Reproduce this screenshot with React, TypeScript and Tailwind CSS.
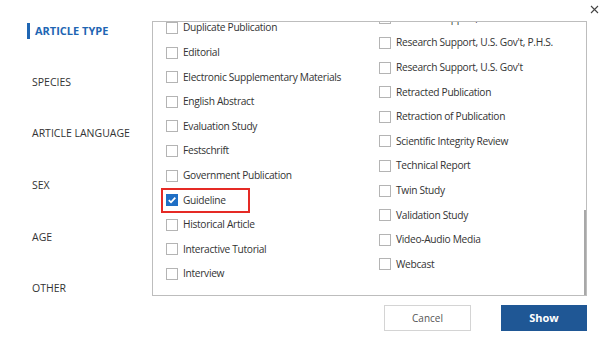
import React from "react";

const col1 = [
  "Duplicate Publication",
  "Editorial",
  "Electronic Supplementary Materials",
  "English Abstract",
  "Evaluation Study",
  "Festschrift",
  "Government Publication",
  "Guideline",
  "Historical Article",
  "Interactive Tutorial",
  "Interview",
];

const col2 = [
  "Research Support, Non-U.S. Gov't",
  "Research Support, U.S. Gov't, P.H.S.",
  "Research Support, U.S. Gov't",
  "Retracted Publication",
  "Retraction of Publication",
  "Scientific Integrity Review",
  "Technical Report",
  "Twin Study",
  "Validation Study",
  "Video-Audio Media",
  "Webcast",
];

const nav = ["SPECIES", "ARTICLE LANGUAGE", "SEX", "AGE", "OTHER"];

function Row({ label, checked, highlight }: { label: string; checked?: boolean; highlight?: boolean }) {
  return (
    <div className="relative flex h-[24.6px] items-center">
      {checked ? (
        <span className="flex h-[12px] w-[12px] items-center justify-center bg-[#1f6fc5]">
          <svg width="10" height="10" viewBox="0 0 10 10">
            <path d="M1.8 5.2 L4 7.3 L8.3 2.6" fill="none" stroke="#fff" strokeWidth="1.8" />
          </svg>
        </span>
      ) : (
        <span className="h-[12px] w-[12px] border border-[#b4b4b4] bg-white" />
      )}
      <span className="ml-[5px] whitespace-nowrap text-[10.2px] tracking-[-0.3px] text-[#333]">{label}</span>
      {highlight && (
        <span className="pointer-events-none absolute left-[-5px] top-[0px] h-[25px] w-[89px] border-2 border-[#e52a25]" />
      )}
    </div>
  );
}

export default function App() {
  return (
    <div
      className="relative h-[337px] w-[600px] overflow-hidden bg-white"
      style={{ fontFamily: '"Open Sans", "Noto Sans", sans-serif' }}
    >
      <button className="absolute right-[1px] top-[3px] flex h-[12px] w-[10px] items-center justify-center">
        <svg width="9" height="9" viewBox="0 0 9 9">
          <path d="M1 1 L8 8 M8 1 L1 8" stroke="#444" strokeWidth="1.1" />
        </svg>
      </button>
      <div className="flex pt-[21px]">
        <div className="w-[152px] shrink-0 pt-[1.5px]">
          <div className="ml-[27px] flex h-[17px] items-center">
            <span className="h-[16px] w-[3px] bg-[#1f66b3]" />
            <span className="ml-[5px] text-[11px] font-bold text-[#1f66b3]">ARTICLE TYPE</span>
          </div>
          {nav.map((n) => (
            <div key={n} className="ml-[32px] mt-[34.6px] flex h-[17px] items-center text-[10.5px] text-[#333]">
              {n}
            </div>
          ))}
        </div>
        <div className="flex flex-col">
          <div className="relative h-[275px] w-[435px] overflow-hidden border border-[#bdbdbd]">
            <div className="flex">
              <div className="ml-[13px] mt-[-6.3px] w-[213px]">
                {col1.map((l) => (
                  <Row key={l} label={l} checked={l === "Guideline"} highlight={l === "Guideline"} />
                ))}
              </div>
              <div className="mt-[-15.9px]">
                {col2.map((l) => (
                  <Row key={l} label={l} />
                ))}
              </div>
            </div>
            <div className="absolute right-0 top-[188px] h-[86px] w-[2px] bg-[#a8a8a8]" />
          </div>
          <div className="mt-[9px] flex justify-end gap-[30px]">
            <button className="h-[26px] w-[87px] border border-[#d4d4d4] bg-white text-[10px] text-[#555]">
              Cancel
            </button>
            <button className="h-[26px] w-[86px] bg-[#1f5795] text-[11px] font-bold text-white">Show</button>
          </div>
        </div>
      </div>
    </div>
  );
}
